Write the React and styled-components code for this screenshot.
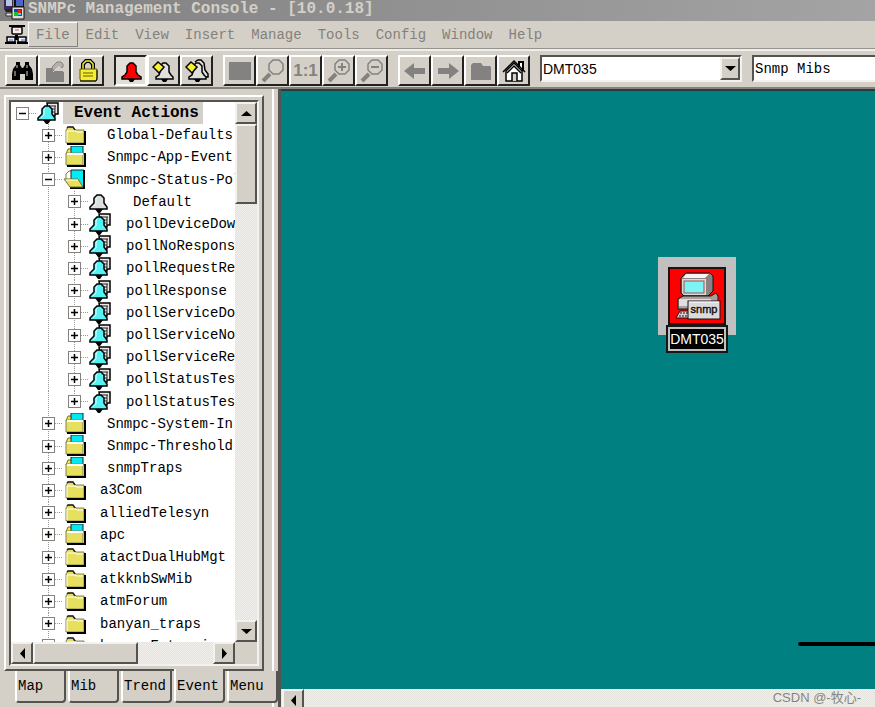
import React from "react";
import styled, { createGlobalStyle, css } from "styled-components";

const face = "#d4d0c8";
const dark = "#55534f";
const grey = "#848280";
const teal = "#008080";
const mono = `"Liberation Mono", "Noto Sans CJK SC", monospace`;
const sans = `"Liberation Sans", "Noto Sans CJK SC", sans-serif`;

const MENUS = ["File", "Edit", "View", "Insert", "Manage", "Tools", "Config", "Window", "Help"];

const TABS = ["Map", "Mib", "Trend", "Event", "Menu"];

const ROWS = [
  { level: 0, icon: "bell", label: "Event Actions", open: true },
  { level: 1, icon: "folder", label: "Global-Defaults", wide: true },
  { level: 1, icon: "filed", label: "Snmpc-App-Event", wide: true },
  { level: 1, icon: "opened", label: "Snmpc-Status-Pol", wide: true, open: true },
  { level: 2, icon: "plain", label: "Default", wide: true },
  { level: 2, icon: "bell", label: "pollDeviceDow" },
  { level: 2, icon: "bell", label: "pollNoRespons" },
  { level: 2, icon: "bell", label: "pollRequestRe" },
  { level: 2, icon: "bell", label: "pollResponse" },
  { level: 2, icon: "bell", label: "pollServiceDo" },
  { level: 2, icon: "bell", label: "pollServiceNo" },
  { level: 2, icon: "bell", label: "pollServiceRe" },
  { level: 2, icon: "bell", label: "pollStatusTes" },
  { level: 2, icon: "bell", label: "pollStatusTes" },
  { level: 1, icon: "filed", label: "Snmpc-System-In", wide: true },
  { level: 1, icon: "filed", label: "Snmpc-Threshold-", wide: true },
  { level: 1, icon: "filed", label: "snmpTraps", wide: true },
  { level: 1, icon: "folder", label: "a3Com" },
  { level: 1, icon: "folder", label: "alliedTelesyn" },
  { level: 1, icon: "filed", label: "apc" },
  { level: 1, icon: "folder", label: "atactDualHubMgt" },
  { level: 1, icon: "folder", label: "atkknbSwMib" },
  { level: 1, icon: "folder", label: "atmForum" },
  { level: 1, icon: "folder", label: "banyan_traps" },
  { level: 1, icon: "folder", label: "banyanExtensi" },
];

function App() {
  return (
    <>
      <GlobalStyle />
      <Window>
        <TitleBar>
          <AppIcon />
          <Title>SNMPc Management Console - [10.0.18]</Title>
        </TitleBar>
        <MenuBar>
          <NetworkIcon />
          {MENUS.map((name) => (
            <MenuItem key={name} $raised={name === "File"}>
              {name}
            </MenuItem>
          ))}
        </MenuBar>
        <Toolbar />
        <Body>
          <Sidebar>
            <EventTree />
            <Tabs>
              {TABS.map((name) => (
                <Tab key={name} $active={name === "Event"}>
                  {name}
                </Tab>
              ))}
            </Tabs>
          </Sidebar>
          <MapView />
        </Body>
      </Window>
    </>
  );
}

export default App;

function Toolbar() {
  return (
    <ToolRow>
      <ToolGroup>
        <Tool aria-label="Find"><Binoculars /></Tool>
        <Tool aria-label="Edit"><EditIcon /></Tool>
        <Tool aria-label="Lock"><LockIcon /></Tool>
      </ToolGroup>
      <ToolGroup>
        <Tool aria-label="Alarms" $pressed>
          <Glyph>
            <BellShape fill="#ff0000" />
          </Glyph>
        </Tool>
        <Tool aria-label="Acknowledge"><AckIcon /></Tool>
        <Tool aria-label="Acknowledge all"><AckIcon all /></Tool>
      </ToolGroup>
      <ToolGroup>
        <Tool aria-label="Whole map">
          <Glyph><rect x="1" y="3" width="22" height="18" fill={grey} /></Glyph>
        </Tool>
        <Tool aria-label="Zoom"><Lens /></Tool>
        <Tool>1:1</Tool>
        <Tool aria-label="Zoom in"><Lens sign="M11 8h8M15 4v8" /></Tool>
        <Tool aria-label="Zoom out"><Lens sign="M11 8h8" /></Tool>
      </ToolGroup>
      <ToolGroup>
        <Tool aria-label="Back">
          <Glyph><path d="M1 12 11 4v5h11v6H11v5z" fill={grey} /></Glyph>
        </Tool>
        <Tool aria-label="Forward">
          <Glyph><path d="M23 12 13 4v5H2v6h11v5z" fill={grey} /></Glyph>
        </Tool>
        <Tool aria-label="Folder">
          <Glyph><path d="M2 6 4 4h8l2 3h7l1 1v13H2z" fill={grey} /></Glyph>
        </Tool>
        <Tool aria-label="Home"><HomeIcon /></Tool>
      </ToolGroup>
      <Combo>
        <ComboSelect aria-label="Object" $font={sans}>
          <option>DMT035</option>
        </ComboSelect>
        <ComboArrow><Arrow dir="down" /></ComboArrow>
      </Combo>
      <Combo>
        <ComboSelect aria-label="Mib group" $font={mono}>
          <option>Snmp Mibs</option>
        </ComboSelect>
        <ComboArrow><Arrow dir="down" /></ComboArrow>
      </Combo>
    </ToolRow>
  );
}

function EventTree() {
  return (
    <Panel>
      <Well>
        <Viewport>
          <Tree>
            {ROWS.map((row, i) => (
              <Row key={i}>
                {Array.from({ length: row.level }, (_, n) => (
                  <Indent key={n} $line={n === 1} />
                ))}
                <Branch $line={row.level > 0} $end={i === 13}>
                  <Expander aria-label={row.open ? "Collapse" : "Expand"}>
                    <svg width="11" height="11" viewBox="0 0 11 11">
                      <path
                        d={row.open ? "M2 5.5h7" : "M2 5.5h7M5.5 2v7"}
                        stroke="#000"
                        strokeWidth="1.5"
                      />
                    </svg>
                  </Expander>
                </Branch>
                <TreeIcon kind={row.icon} />
                <Label $root={row.level === 0} $wide={row.wide}>
                  {row.label}
                </Label>
              </Row>
            ))}
          </Tree>
        </Viewport>
        <VScroll>
          <ScrollButton aria-label="Scroll up"><Arrow dir="up" /></ScrollButton>
          <Thumb $height={80} />
          <ScrollButton aria-label="Scroll down"><Arrow dir="down" /></ScrollButton>
        </VScroll>
        <HScroll>
          <ScrollButton aria-label="Scroll left"><Arrow dir="left" /></ScrollButton>
          <Thumb $width={105} />
          <ScrollButton aria-label="Scroll right"><Arrow dir="right" /></ScrollButton>
        </HScroll>
      </Well>
    </Panel>
  );
}

function MapView() {
  return (
    <MapPane>
      <Canvas>
        <Link />
        <Node>
          <Selection>
            <NodePicture />
          </Selection>
          <NodeName>
            <span>DMT035</span>
          </NodeName>
        </Node>
      </Canvas>
      <MapScroll>
        <ScrollButton aria-label="Scroll map left"><Arrow dir="left" /></ScrollButton>
        <Watermark>CSDN @-牧心-</Watermark>
      </MapScroll>
    </MapPane>
  );
}

// ---- icons ----

function Glyph({ children }) {
  return (
    <svg width="24" height="24" viewBox="0 0 24 24" fill="none">
      {children}
    </svg>
  );
}

function Arrow({ dir }) {
  const d = {
    up: "M5.5 3 11 8H0z",
    down: "M5.5 8 0 3h11z",
    left: "M3 5.5 8 0v11z",
    right: "M8 5.5 3 0v11z",
  }[dir];
  return (
    <svg width="11" height="11" viewBox="0 0 11 11">
      <path d={d} fill="#000" />
    </svg>
  );
}

function BellShape({ fill }) {
  return (
    <g>
      <path d="M9 20h7l-2 3h-3z" fill="#000" />
      <path
        d="M11 4h3l3 3v6l2 3 3 2v2H3v-2l3-2 2-3V7z"
        fill={fill}
        stroke="#000"
        strokeWidth="1.5"
      />
    </g>
  );
}

function Binoculars() {
  return (
    <Glyph>
      <path
        d="M6 3h4v3l2 3h1l2-3V3h4v3l3 4 1 5v6h-8v-6h-5v6H2v-6l1-5 3-4z"
        fill="#000"
      />
      <path d="M7 6v3M5 12v5M17 6v3M17 12v5" stroke="#d4d0c8" />
    </Glyph>
  );
}

function EditIcon() {
  return (
    <Glyph>
      <path d="M3 9h6l2 3h10v11H3z" fill={grey} />
      <path d="M9 8l5-5h4l2 2v3l-2 1-2-2-5 5z" fill="#b4b1ab" stroke={grey} />
      <path d="M10 13l6-6 5 6" stroke={face} />
    </Glyph>
  );
}

function LockIcon() {
  return (
    <Glyph>
      <path d="M7 11V5l3-3h4l3 3v6" stroke="#000" strokeWidth="4" />
      <path d="M7 11V5l3-3h4l3 3v6" stroke="#f4ed32" strokeWidth="1.5" />
      <path d="M4 10h17v10l-1 2H5l-1-2z" fill="#f4ed32" stroke="#5a5608" />
      <path d="M7 14h10M7 17h10" stroke="#605c10" />
      <path d="M4 22h16l1-2v-9" stroke="#000" />
    </Glyph>
  );
}

function AckIcon({ all }) {
  return (
    <Glyph>
      {all && (
        <path
          d="M10 3l3-2h3l3 3 1 7 3 4v3h-5"
          fill="#e2e0dc"
          stroke="#000"
          strokeWidth="1.5"
        />
      )}
      <path d="M9 20h7l-2 3h-3z" fill="#000" />
      <path
        d="M11 4h3l3 3v6l2 3 2 2v2H4v-2l3-2 1-3V7z"
        fill="#e2e0dc"
        stroke="#000"
        strokeWidth="1.5"
      />
      <path d="M6 3l6 5-5 6-6-6z" fill="#f8f032" stroke="#000" strokeWidth="1.5" />
    </Glyph>
  );
}

function Lens({ sign }) {
  return (
    <Glyph>
      <path d="M2 22l7-7" stroke={grey} strokeWidth="4" />
      <path d="M12 1h6l4 4v6l-4 4h-6l-4-4V5z" stroke={grey} strokeWidth="1.5" />
      {sign && <path d={sign} stroke={grey} strokeWidth="2" />}
    </Glyph>
  );
}

function HomeIcon() {
  return (
    <Glyph>
      <path d="M17 8V3h4v9" fill="#fff" stroke="#000" strokeWidth="2" />
      <path d="M4 12l8-8 8 8v10H4z" fill="#fff" stroke="#000" strokeWidth="1.5" />
      <path d="M1 13 12 2l11 11M5 14l7-7 7 7" stroke="#000" strokeWidth="1.5" />
      <path d="M10 22v-8h5v8" fill="#d4d0c8" stroke="#000" strokeWidth="1.5" />
    </Glyph>
  );
}

function TreeIcon({ kind }) {
  if (kind === "bell" || kind === "plain") {
    return (
      <TreeSvg viewBox="0 0 24 22">
        {kind === "bell" && (
          <g>
            <path d="M10 1h11v11h-3v2h-6z" fill="#e8e8e8" stroke="#000" strokeWidth="1.5" />
            <path d="M12 4h7M13 7h5M14 10h4M18 4v8" stroke="#222" fill="none" />
          </g>
        )}
        <path d="M6 18h8l-3 4H9z" fill="#000" />
        <path
          d="M8 4h4l3 3v5l3 4v2H1v-2l4-4V7z"
          fill={kind === "bell" ? "#54f2f4" : "#dedede"}
          stroke="#000"
          strokeWidth="1.5"
        />
        <path d="M8 6 7 8v5l-3 3" stroke="#d8ffff" fill="none" />
      </TreeSvg>
    );
  }
  if (kind === "opened") {
    return (
      <TreeSvg viewBox="0 0 24 22">
        <path d="M3 10V5l3-3h3v12z" fill="#fff" stroke="#807c30" />
        <path d="M8 1h13v17h-4L8 10z" fill="#00eef4" stroke="#222" />
        <path d="M21 1v18H7" fill="none" stroke="#000" strokeWidth="2" />
        <path d="M1 10h14l5 8H7z" fill="#e8e25a" stroke="#77732a" />
        <path d="M3 11h12" fill="none" stroke="#fff" />
      </TreeSvg>
    );
  }
  return (
    <TreeSvg viewBox="0 0 24 22">
      {kind === "folder" ? (
        <g>
          <path d="M3 6 5 3h5l3 3h8v13H3z" fill="#e6e05e" stroke="#85825a" />
          <path d="M4 4 5 3h5l2 3" fill="none" stroke="#222" strokeWidth="1.5" />
          <path d="M4 18V7h8l2 1h6" fill="none" stroke="#fff" />
        </g>
      ) : (
        <g>
          <path d="M3 8 5 3h4v6" fill="#f0e850" stroke="#77732a" />
          <rect x="8" y="0" width="12" height="8" fill="#00eaf4" stroke="#222" />
          <path d="M3 7h17v12H3z" fill="#e6e05e" stroke="#85825a" />
          <path d="M4 8h16" stroke="#fff" strokeWidth="2" />
        </g>
      )}
      <path d="M22 7v13H4" fill="none" stroke="#000" strokeWidth="2" />
    </TreeSvg>
  );
}

function AppIcon() {
  return (
    <svg width="22" height="21" viewBox="0 0 22 21">
      <path d="M0 0h9v9H0z" fill="#3b2a55" />
      <path d="M2 0h6v6H2z" fill="#b8c4e0" />
      <path d="M10 0h10v8H10z" fill="#111" />
      <path d="M12 0h7v6h-7z" fill="#4f64c4" />
      <path d="M0 9h9v3H2z" fill="#222" />
      <path d="M2 13h8v3H2z" fill="#e4e0dc" stroke="#333" />
      <path d="M8 7h12v12H8z" fill="#e0dcd8" stroke="#111" />
      <path d="M10 9h8v7h-8z" fill="#2434d0" />
      <path d="M10 12h4v4h-4z" fill="#12c818" />
      <path d="M14 10h3v3h-3z" fill="#f02020" />
      <path d="M14 13h3v2h-3z" fill="#20e0f0" />
    </svg>
  );
}

function NetworkIcon() {
  return (
    <svg width="23" height="22" viewBox="0 0 23 22">
      <path d="M4 1h16v2H4zM10 11h3v5h-3zM6 13h12v2H6z" fill="#000" />
      <rect x="7" y="3" width="10" height="7" rx="1" fill="#f2f0f0" stroke="#000" strokeWidth="1.5" />
      <path d="M10 6h4" stroke="#c06060" />
      <rect x="2" y="13" width="8" height="5" fill="#eef0fa" stroke="#000" strokeWidth="1.5" />
      <rect x="13" y="13" width="8" height="5" fill="#eef0fa" stroke="#000" strokeWidth="1.5" />
      <path d="M4 16h4M16 16h4" stroke="#4a62e0" />
      <path d="M0 19h11M12 19h11" stroke="#000" strokeWidth="2" />
    </svg>
  );
}

// managed host: a red tile with a PC and its snmp plate
function NodePicture() {
  return (
    <svg width="58" height="58" viewBox="0 0 58 58">
      <rect x="1" y="1" width="56" height="56" fill="#ff0000" stroke="#201010" strokeWidth="2" />
      <path d="M13 11l5-5h24l3 3v15l-5 5H16l-3-3z" fill="#8a8280" stroke="#1c1010" />
      <path d="M14 12h24v16H16l-2-2z" fill="#dedada" />
      <path d="M18 7h23l-4 4H15z" fill="#f6f4f4" />
      <rect x="16" y="14" width="20" height="12" fill="#7df4f4" stroke="#a05050" />
      <path d="M10 32l5-3h28l5-3 2 3v9l-4 4H10z" fill="#a8a09e" stroke="#1c1010" />
      <path d="M11 32h32v7H11z" fill="#e2dede" />
      <path d="M12 44h11v7H8z" fill="#d6d2d2" stroke="#201010" />
      <path d="M12 46h8M11 49h9" stroke="#201010" strokeDasharray="2 1" />
      <rect x="20" y="34" width="32" height="18" fill="#dcdada" stroke="#1c1010" />
      <path d="M21 35h30" stroke="#fff" />
      <text x="36" y="46" textAnchor="middle" fontFamily="Liberation Sans" fontSize="11" stroke="#111" strokeWidth="0.4" fill="#111">
        snmp
      </text>
    </svg>
  );
}

// ---- styles ----

const GlobalStyle = createGlobalStyle`
  * {
    box-sizing: border-box;
  }
  body {
    margin: 0;
    background: ${face};
    font: 14px/22px ${mono};
  }
  button, select {
    font: inherit;
    color: inherit;
    margin: 0;
    padding: 0;
    border-radius: 0;
  }
`;

// raised 3d edge shared by the scrollbar parts
const raised = css`
  background: ${face};
  border: 2px solid;
  border-color: #f4f2ee ${dark} ${dark} #f4f2ee;
`;

const dither = css`
  background: repeating-conic-gradient(#f2f0ed 0 25%, #e4e2dd 0 50%) 0 0 / 2px 2px;
`;

const Window = styled.div`
  display: flex;
  flex-direction: column;
  height: 100vh;
  min-height: 400px;
  overflow: hidden;
`;

const TitleBar = styled.header`
  display: flex;
  flex: none;
  gap: 2px;
  height: 21px;
  padding-left: 4px;
  background: linear-gradient(90deg, #808080, #a4a4a4);
`;

const Title = styled.h1`
  margin: 0;
  font-size: 16px;
  line-height: 18px;
  color: ${face};
  white-space: pre;
`;

const MenuBar = styled.nav`
  display: flex;
  flex: none;
  align-items: center;
  height: 28px;
  padding: 0 5px;
  border-bottom: 1px solid #96948f;
`;

const MenuItem = styled.button`
  height: 25px;
  padding: 0 7px;
  border: 1px solid;
  border-color: ${(p) => (p.$raised ? `#fff ${grey} ${grey} #fff` : "transparent")};
  background: none;
  color: #84817b;
`;

const ToolRow = styled.div`
  display: flex;
  flex: none;
  gap: 10px;
  height: 40px;
  padding: 4px 5px 0;
  border-top: 2px solid #f0eeea;
  border-bottom: 2px solid #85827e;
  overflow: hidden;
`;

const ToolGroup = styled.div`
  display: flex;
  flex: none;
`;

const Tool = styled.button`
  display: flex;
  align-items: center;
  justify-content: center;
  width: 33px;
  height: 31px;
  border: 2px solid;
  border-color: ${(p) => (p.$pressed ? "#222 #fff #fff #222" : "#fff #222 #222 #fff")};
  background: ${(p) => (p.$pressed ? "#e2dfda" : face)};
  color: ${grey};
  font: bold 17px ${sans};
`;

const Combo = styled.div`
  display: grid;
  flex: none;
  grid-template-columns: 1fr 20px;
  width: 202px;
  height: 27px;
  border: 2px solid;
  border-color: ${dark} #f4f2ee #f4f2ee ${dark};
  background: #fff;
`;

const ComboSelect = styled.select`
  grid-area: 1 / 1 / 2 / 3;
  appearance: none;
  padding-left: 1px;
  border: 0;
  background: none;
  color: #000;
  font-family: ${(p) => p.$font};
`;

const ComboArrow = styled.span`
  ${raised}
  grid-area: 1 / 2;
  display: flex;
  align-items: center;
  justify-content: center;
  pointer-events: none;
`;

const Body = styled.main`
  display: flex;
  flex: 1;
  min-height: 0;
`;

const Sidebar = styled.aside`
  display: flex;
  flex: none;
  flex-direction: column;
  width: 281px;
  padding: 6px 0 4px 4px;
  border-right: 3px solid ${dark};
  background: linear-gradient(90deg, transparent 272px, #fff 272px, #fff 274px, transparent 274px);
`;

const Panel = styled.section`
  display: flex;
  flex: 1;
  min-height: 0;
  width: 260px;
  padding: 3px;
  border: 2px solid;
  border-color: #fff ${dark} ${dark} #fff;
`;

const Well = styled.div`
  display: grid;
  flex: 1;
  grid-template: minmax(0, 1fr) 22px / minmax(0, 1fr) 22px;
  min-height: 0;
  border: 2px solid;
  border-color: ${dark} #f4f2ee #f4f2ee ${dark};
`;

const Viewport = styled.div`
  overflow: hidden;
  background: #fff;
`;

const Tree = styled.ul`
  display: grid;
  grid-auto-rows: 1fr;
  height: 555px;
  margin: 0;
  padding: 0;
  list-style: none;
`;

const Row = styled.li`
  display: flex;
  align-items: center;
  min-width: max-content;
`;

const dots = "repeating-linear-gradient(#999 0 1px, transparent 1px 2px)";

const Indent = styled.span`
  align-self: stretch;
  width: 26px;
  background: ${(p) => (p.$line ? `${dots} 11px 0 / 1px 100% no-repeat` : "none")};
`;

const Branch = styled.span`
  display: flex;
  align-items: center;
  align-self: stretch;
  width: 26px;
  padding-left: 5px;
  background:
    repeating-linear-gradient(90deg, #999 0 1px, transparent 1px 2px) 18px 50% / 8px 1px no-repeat,
    ${(p) => (p.$line ? dots : "linear-gradient(transparent, transparent)")} 11px 0 / 1px ${(p) => (p.$end ? "50%" : "100%")} no-repeat;
`;

const Expander = styled.button`
  display: flex;
  width: 13px;
  height: 13px;
  border: 1px solid #85827e;
  background: #fff;
`;

const TreeSvg = styled.svg`
  flex: none;
  width: 24px;
  height: 22px;
`;

const Label = styled.span`
  padding-left: ${(p) => (p.$wide ? 20 : 13)}px;
  white-space: pre;
  color: #000;

  ${(p) =>
    p.$root &&
    css`
      margin-left: 2px;
      padding: 0 4px 0 11px;
      background: ${face};
      font-size: 16px;
      font-weight: bold;
    `}
`;

const VScroll = styled.div`
  ${dither}
  display: flex;
  flex-direction: column;

  > :last-child {
    margin-top: auto;
  }
`;

const HScroll = styled.div`
  ${dither}
  display: flex;

  > :last-child {
    margin-left: auto;
  }
`;

const ScrollButton = styled.button`
  ${raised}
  display: flex;
  flex: none;
  align-items: center;
  justify-content: center;
  width: 22px;
  height: 22px;
`;

const Thumb = styled.div`
  ${raised}
  width: ${(p) => (p.$width ? `${p.$width}px` : "auto")};
  height: ${(p) => (p.$height ? `${p.$height}px` : "auto")};
`;

const Tabs = styled.div`
  display: flex;
  flex: none;
  gap: 2px;
  padding-left: 11px;
`;

const Tab = styled.button`
  width: 51px;
  height: 32px;
  padding-left: 1px;
  border: 2px solid;
  border-color: ${face} ${dark} ${dark} #fff;
  border-top-width: 0;
  border-radius: 0 0 4px 4px;
  background: ${face};
  color: #000;
  text-align: left;

  ${(p) =>
    p.$active &&
    css`
      margin-top: -2px;
      height: 34px;
      padding-top: 2px;
    `}
`;

const MapPane = styled.section`
  display: flex;
  flex: 1;
  flex-direction: column;
  min-width: 0;
`;

const Canvas = styled.div`
  position: relative;
  flex: 1;
  overflow: hidden;
  border-top: 2px solid #23403f;
  background: ${teal};
`;

const Link = styled.div`
  position: absolute;
  top: 551px;
  right: 0;
  left: 517px;
  height: 4px;
  border-radius: 2px 0 0 2px;
  background: #000;
`;

const Node = styled.div`
  position: absolute;
  top: 166px;
  left: 377px;
  display: grid;
  justify-items: center;
`;

const Selection = styled.div`
  display: flex;
  justify-content: center;
  width: 78px;
  height: 78px;
  padding-top: 10px;
  background: #c0c0c0;
`;

const NodeName = styled.div`
  margin-top: -10px;
  padding: 2px;
  border: 2px solid #181818;
  background: #c0c0c0;
  color: #fff;
  font: 14px/20px ${sans};

  span {
    display: block;
    background: #000;
  }
`;

const MapScroll = styled.div`
  ${dither}
  display: flex;
  flex: none;
  justify-content: space-between;
  height: 18px;
  padding-left: 1px;
  overflow: hidden;
`;

const Watermark = styled.span`
  padding-right: 14px;
  color: #85857f;
  font: 13px/18px ${sans};
`;
